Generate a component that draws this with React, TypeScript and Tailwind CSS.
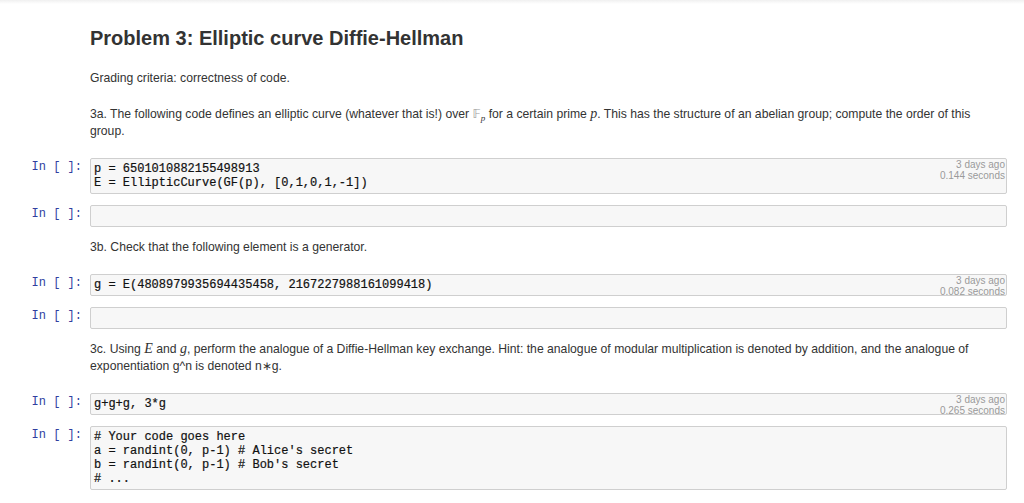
import React from "react";

const sans = { fontFamily: '"Liberation Sans", Arial, sans-serif' };

function Prompt() {
  return (
    <div
      className="w-[90px] shrink-0 pr-[8px] pt-[2px] text-right text-[12px] leading-[14px] text-[#303F9F] whitespace-pre"
      style={{ fontFamily: '"Liberation Mono", monospace' }}
    >
      {"In [ ]:"}
    </div>
  );
}

function CodeCell({ lines, time }: { lines: string[]; time?: string }) {
  return (
    <div className="flex">
      <Prompt />
      <div className="relative flex-1 rounded-[2px] border border-[#cfcfcf] bg-[#f7f7f7] py-[3px] pl-[3px]">
        <pre
          className="m-0 text-[12px] leading-[14px] text-[#111] min-h-[14px] [-webkit-text-stroke:0.2px_#111]"
          style={{ fontFamily: '"Liberation Mono", monospace' }}
        >
          {lines.join("\n")}
        </pre>
        {time && (
          <div
            className="absolute right-[1px] top-0 text-right text-[10px] leading-[11px] text-[#9a9a9a]"
            style={sans}
          >
            <div>3 days ago</div>
            <div>{time}</div>
          </div>
        )}
      </div>
    </div>
  );
}

function MI({ children }: { children: React.ReactNode }) {
  return (
    <span
      className="italic text-[14px] leading-[0]"
      style={{ fontFamily: '"Liberation Serif", "Times New Roman", serif' }}
    >
      {children}
    </span>
  );
}

function Md({ children }: { children: React.ReactNode }) {
  return (
    <div className="flex">
      <div className="w-[90px] shrink-0" />
      <div className="flex-1 pt-[1px] pb-[7px] text-[12.2px] leading-[17px] text-[#333] whitespace-nowrap" style={sans}>
        {children}
      </div>
    </div>
  );
}

export default function App() {
  return (
    <div className="min-h-[503px] w-full bg-white" style={sans}>
      <div className="h-[4px] bg-gradient-to-b from-[#f0f0f0] to-white" />
      <div className="flex flex-col gap-[11px] pr-[17px] pb-[14px]">
        <div className="flex mt-[22px]">
          <div className="w-[90px] shrink-0" />
          <h1 className="text-[20px] leading-[24px] font-bold text-[#333] pb-[8px]">
            Problem 3: Elliptic curve Diffie-Hellman
          </h1>
        </div>
        <Md>Grading criteria: correctness of code.</Md>
        <Md>
          3a. The following code defines an elliptic curve (whatever that is!) over{" "}
          <span className="text-[#999] leading-[0]" style={{ fontFamily: '"DejaVu Sans", sans-serif' }}>
            𝔽
          </span>
          <span
            className="italic text-[9px] leading-[0] relative top-[3px]"
            style={{ fontFamily: '"Liberation Serif", serif' }}
          >
            p
          </span>{" "}
          for a certain prime <MI>p</MI>. This has the structure of an abelian group; compute the order of this
          <br />
          group.
        </Md>
        <CodeCell
          lines={["p = 6501010882155498913", "E = EllipticCurve(GF(p), [0,1,0,1,-1])"]}
          time="0.144 seconds"
        />
        <CodeCell lines={[""]} />
        <Md>3b. Check that the following element is a generator.</Md>
        <CodeCell
          lines={["g = E(4808979935694435458, 2167227988161099418)"]}
          time="0.082 seconds"
        />
        <CodeCell lines={[""]} />
        <Md>
          3c. Using <MI>E</MI> and <MI>g</MI>, perform the analogue of a Diffie-Hellman key exchange. Hint: the
          analogue of modular multiplication is denoted by addition, and the analogue of
          <br />
          exponentiation g^n is denoted n∗g.
        </Md>
        <CodeCell lines={["g+g+g, 3*g"]} time="0.265 seconds" />
        <CodeCell
          lines={[
            "# Your code goes here",
            "a = randint(0, p-1) # Alice's secret",
            "b = randint(0, p-1) # Bob's secret",
            "# ...",
          ]}
        />
      </div>
    </div>
  );
}
